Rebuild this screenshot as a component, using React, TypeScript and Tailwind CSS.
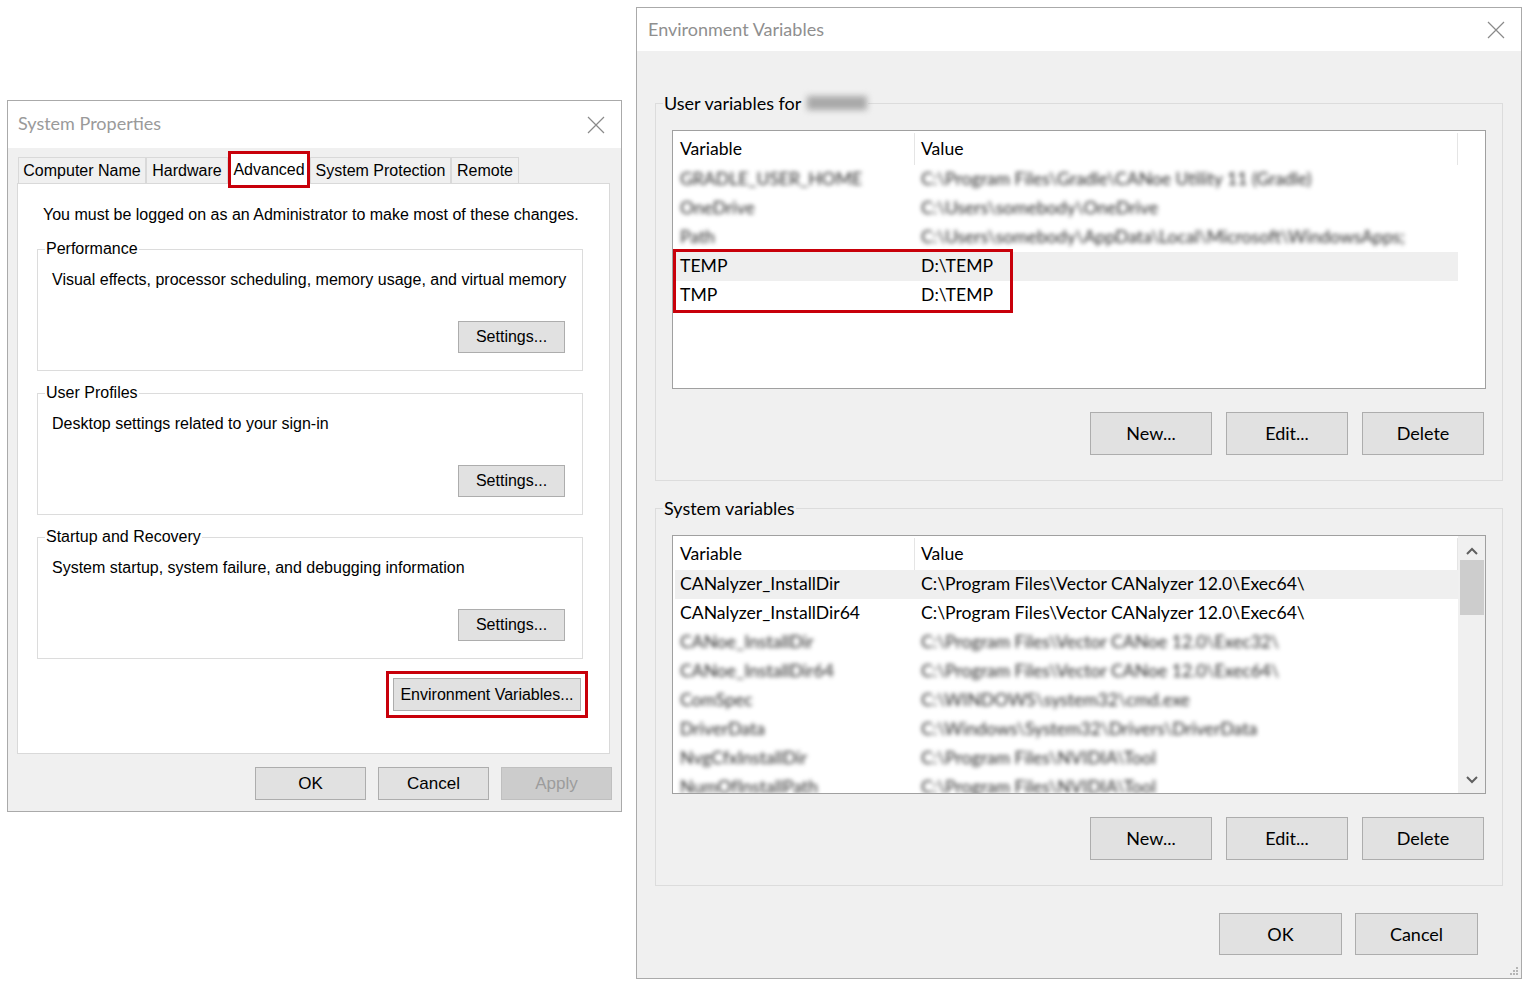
import React from "react";

const ARIAL = "font-['Liberation_Sans',Arial,sans-serif]";
const SEGOE = "font-['Segoe_UI',Lato,'Noto_Sans',sans-serif]";

function CloseX() {
  return (
    <svg width="18" height="18" viewBox="0 0 18 18" className="text-[#8a8a8a]">
      <path d="M1 1L17 17M17 1L1 17" stroke="currentColor" strokeWidth="1.2" fill="none" />
    </svg>
  );
}

function WinButton({
  children,
  className = "",
  disabled = false,
}: {
  children: React.ReactNode;
  className?: string;
  disabled?: boolean;
}) {
  return (
    <div
      className={`flex items-center justify-center border ${
        disabled
          ? "border-[#bfbfbf] bg-[#cccccc] text-[#9c9c9c]"
          : "border-[#adadad] bg-[#e1e1e1] text-black"
      } ${className}`}
    >
      {children}
    </div>
  );
}

/* ---------- System Properties ---------- */

function GroupBox({ label, text }: { label: string; text: string }) {
  return (
    <div className="relative ml-[19px] w-[546px] border border-[#dcdcdc] px-[14px] pt-[20px] pb-[17px]">
      <div className="absolute -top-[11px] left-[7px] bg-white px-[1px] text-[16px] leading-[20px]">
        {label}
      </div>
      <div className="text-[16px] leading-[20px]">{text}</div>
      <div className="mt-[31px] flex justify-end pr-[3px]">
        <WinButton className="h-[32px] w-[107px] text-[16px]">Settings...</WinButton>
      </div>
    </div>
  );
}

const TABS = [
  { name: "Computer Name", w: "w-[128px]" },
  { name: "Hardware", w: "w-[82px]" },
  { name: "Advanced", w: "w-[82px]", active: true },
  { name: "System Protection", w: "w-[141px]" },
  { name: "Remote", w: "w-[68px]" },
];

function SystemProperties() {
  return (
    <div className={`absolute left-[7px] top-[100px] flex h-[712px] w-[615px] flex-col border border-[#aaaaaa] bg-[#f0f0f0] ${ARIAL}`}>
      <div className={`flex h-[47px] shrink-0 items-center justify-between bg-white pl-[10px] pr-[16px] ${SEGOE}`}>
        <span className="-mt-[2px] text-[18px] text-[#9a9a9a]">System Properties</span>
        <CloseX />
      </div>

      <div className="mt-[2px] flex h-[33px] items-end pl-[10px]">
        {TABS.map((t) =>
          t.active ? (
            <div
              key={t.name}
              className={`relative z-10 -mb-[5px] flex h-[37px] ${t.w} items-start justify-center border-[3px] border-[#c8000a] bg-white pt-[4px] text-[16px]`}
            >
              {t.name}
            </div>
          ) : (
            <div
              key={t.name}
              className={`flex h-[26px] ${t.w} items-center justify-center border-x border-t border-[#d9d9d9] text-[16px]`}
            >
              {t.name}
            </div>
          )
        )}
      </div>

      <div className="ml-[9px] flex h-[571px] w-[593px] flex-col border border-[#d9d9d9] bg-white">
        <div className="pl-[25px] pt-[21px] text-[16px] leading-[20px]">
          You must be logged on as an Administrator to make most of these changes.
        </div>
        <div className="mt-[24px] flex flex-col gap-[22px]">
          <GroupBox
            label="Performance"
            text="Visual effects, processor scheduling, memory usage, and virtual memory"
          />
          <GroupBox label="User Profiles" text="Desktop settings related to your sign-in" />
          <GroupBox
            label="Startup and Recovery"
            text="System startup, system failure, and debugging information"
          />
        </div>
        <div className="mt-[12px] flex justify-end pr-[21px]">
          <div className="border-[3px] border-[#c8000a] p-[4px]">
            <WinButton className="h-[33px] w-[188px] text-[16px]">Environment Variables...</WinButton>
          </div>
        </div>
      </div>

      <div className="mt-[13px] flex justify-end gap-[12px] pr-[9px]">
        <WinButton className="h-[33px] w-[111px] text-[17px]">OK</WinButton>
        <WinButton className="h-[33px] w-[111px] text-[17px]">Cancel</WinButton>
        <WinButton disabled className="h-[33px] w-[111px] text-[17px]">
          Apply
        </WinButton>
      </div>
    </div>
  );
}

/* ---------- Environment Variables ---------- */

type Row = { v: string; val: string; blur?: boolean; hl?: boolean };

const USER_ROWS: Row[] = [
  { v: "GRADLE_USER_HOME", val: "C:\\Program Files\\Gradle\\CANoe Utility 11 (Gradle)", blur: true },
  { v: "OneDrive", val: "C:\\Users\\somebody\\OneDrive", blur: true },
  { v: "Path", val: "C:\\Users\\somebody\\AppData\\Local\\Microsoft\\WindowsApps;", blur: true },
  { v: "TEMP", val: "D:\\TEMP", hl: true },
  { v: "TMP", val: "D:\\TEMP" },
];

const SYS_ROWS: Row[] = [
  { v: "CANalyzer_InstallDir", val: "C:\\Program Files\\Vector CANalyzer 12.0\\Exec64\\", hl: true },
  { v: "CANalyzer_InstallDir64", val: "C:\\Program Files\\Vector CANalyzer 12.0\\Exec64\\" },
  { v: "CANoe_InstallDir", val: "C:\\Program Files\\Vector CANoe 12.0\\Exec32\\", blur: true },
  { v: "CANoe_InstallDir64", val: "C:\\Program Files\\Vector CANoe 12.0\\Exec64\\", blur: true },
  { v: "ComSpec", val: "C:\\WINDOWS\\system32\\cmd.exe", blur: true },
  { v: "DriverData", val: "C:\\Windows\\System32\\Drivers\\DriverData", blur: true },
  { v: "NvgCfxInstallDir", val: "C:\\Program Files\\NVIDIA\\Tool", blur: true },
  { v: "NumOfInstallPath", val: "C:\\Program Files\\NVIDIA\\Tool", blur: true },
];

function VarList({ rows, scroll }: { rows: Row[]; scroll?: boolean }) {
  const blurCls = "text-[#2a2a2a] blur-[2px]";
  return (
    <div className="relative ml-[16px] flex h-[259px] w-[814px] overflow-hidden border border-[#a0a0a0] bg-white">
      <div className="flex w-[785px] flex-col pt-[2px]">
        <div className="flex h-[32px] shrink-0 items-center text-[17.6px]">
          <div className="flex h-full w-[242px] items-center border-r border-[#e5e5e5] pl-[7px]">Variable</div>
          <div className="flex h-full flex-1 items-center border-r border-[#e5e5e5] pl-[6px]">Value</div>
        </div>
        {rows.map((r, i) => (
          <div
            key={i}
            className={`ml-[2px] flex h-[29px] shrink-0 items-center text-[17.6px] ${r.hl ? "bg-[#efefef]" : ""}`}
          >
            <div className={`w-[240px] truncate pl-[5px] ${r.blur ? blurCls : ""}`}>{r.v}</div>
            <div className={`flex-1 truncate pl-[6px] ${r.blur ? blurCls : ""}`}>{r.val}</div>
          </div>
        ))}
      </div>
      {scroll && (
        <div className="flex w-[27px] flex-col items-center bg-[#f0f0f0]">
          <svg width="14" height="10" viewBox="0 0 14 10" className="mt-[10px] text-[#606060]">
            <path d="M2 8L7 3L12 8" stroke="currentColor" strokeWidth="2" fill="none" />
          </svg>
          <div className="mt-[4px] h-[55px] w-[24px] bg-[#cdcdcd]" />
          <div className="flex-1" />
          <svg width="14" height="10" viewBox="0 0 14 10" className="mb-[8px] text-[#606060]">
            <path d="M2 2L7 7L12 2" stroke="currentColor" strokeWidth="2" fill="none" />
          </svg>
        </div>
      )}
      {!scroll && (
        <div className="pointer-events-none absolute left-0 top-[118px] h-[64px] w-[340px] border-[3px] border-[#c8000a]" />
      )}
    </div>
  );
}

function VarGroup({
  label,
  rows,
  scroll,
}: {
  label: React.ReactNode;
  rows: Row[];
  scroll?: boolean;
}) {
  return (
    <div className="relative mx-[18px] border border-[#dcdcdc] pt-[26px] pb-[25px]">
      <div className="absolute -top-[14px] left-[7px] flex items-center bg-[#f0f0f0] px-[1px] text-[18px] leading-[26px]">
        {label}
      </div>
      <VarList rows={rows} scroll={scroll} />
      <div className="mt-[23px] flex justify-end gap-[14px] pr-[18px]">
        <WinButton className="h-[43px] w-[122px] text-[18px]">New...</WinButton>
        <WinButton className="h-[43px] w-[122px] text-[18px]">Edit...</WinButton>
        <WinButton className="h-[43px] w-[122px] text-[18px]">Delete</WinButton>
      </div>
    </div>
  );
}

function EnvironmentVariables() {
  return (
    <div className={`absolute left-[636px] top-[7px] flex h-[972px] w-[886px] flex-col border border-[#aaaaaa] bg-[#f0f0f0] ${SEGOE}`}>
      <div className="flex h-[43px] shrink-0 items-center justify-between bg-white pl-[11px] pr-[16px]">
        <span className="text-[18px] text-[#8f8f8f]">Environment Variables</span>
        <CloseX />
      </div>
      <div className="mt-[52px]">
        <VarGroup
          label={
            <>
              <span>User variables for</span>
              <span className="ml-[6px] inline-block h-[14px] w-[60px] bg-[#a8a8a8] blur-[3px]" />
            </>
          }
          rows={USER_ROWS}
        />
      </div>
      <div className="mt-[27px]">
        <VarGroup label="System variables" rows={SYS_ROWS} scroll />
      </div>
      <div className="mt-[27px] flex justify-end gap-[13px] pr-[43px]">
        <WinButton className="h-[42px] w-[123px] text-[18px]">OK</WinButton>
        <WinButton className="h-[42px] w-[123px] text-[18px]">Cancel</WinButton>
      </div>
      <div className="flex-1" />
      <div className="flex justify-end pb-[2px] pr-[2px]">
        <svg width="10" height="10" viewBox="0 0 10 10" className="text-[#b5b5b5]">
          <rect x="7" y="1" width="2" height="2" fill="currentColor" />
          <rect x="4" y="4" width="2" height="2" fill="currentColor" />
          <rect x="7" y="4" width="2" height="2" fill="currentColor" />
          <rect x="1" y="7" width="2" height="2" fill="currentColor" />
          <rect x="4" y="7" width="2" height="2" fill="currentColor" />
          <rect x="7" y="7" width="2" height="2" fill="currentColor" />
        </svg>
      </div>
    </div>
  );
}

export default function App() {
  return (
    <div className="relative h-[985px] w-[1526px] overflow-hidden bg-white text-black">
      <SystemProperties />
      <EnvironmentVariables />
    </div>
  );
}
